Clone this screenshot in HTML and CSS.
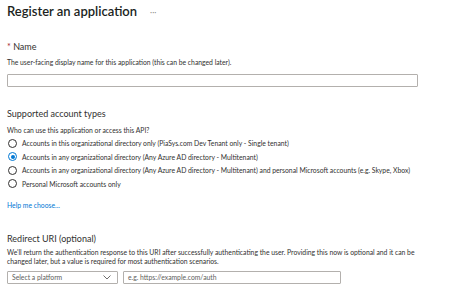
FILE: index.html
```html
<!DOCTYPE html>
<html lang="en">
<head>
  <meta charset="UTF-8">
  <title>Register an application</title>
  <link rel="stylesheet" href="styles.css">
</head>
<body>
  <div class="header">
    <h1>Register an application</h1>
    <span class="more">···</span>
  </div>

  <section class="name-section">
    <div class="field-label"><span class="req">*</span> Name</div>
    <p class="hint">The user-facing display name for this application (this can be changed later).</p>
    <div class="text-input wide"></div>
  </section>

  <section class="accounts">
    <h2>Supported account types</h2>
    <p class="hint">Who can use this application or access this API?</p>
    <div class="radio-list">
      <label class="radio"><span class="circle"></span>Accounts in this organizational directory only (PiaSys.com Dev Tenant only - Single tenant)</label>
      <label class="radio"><span class="circle checked"></span>Accounts in any organizational directory (Any Azure AD directory - Multitenant)</label>
      <label class="radio"><span class="circle"></span>Accounts in any organizational directory (Any Azure AD directory - Multitenant) and personal Microsoft accounts (e.g. Skype, Xbox)</label>
      <label class="radio"><span class="circle"></span>Personal Microsoft accounts only</label>
    </div>
    <a class="help" href="#">Help me choose...</a>
  </section>

  <section class="redirect">
    <h2>Redirect URI (optional)</h2>
    <p class="hint para">We'll return the authentication response to this URI after successfully authenticating the user. Providing this now is optional and it can be changed later, but a value is required for most authentication scenarios.</p>
    <div class="uri-row">
      <div class="select">
        <span>Select a platform</span>
        <svg width="8" height="5" viewBox="0 0 8 5"><path d="M0.5 0.5 L4 4 L7.5 0.5" fill="none" stroke="#605e5c" stroke-width="0.9"/></svg>
      </div>
      <div class="text-input uri"><span class="placeholder">e.g. https://example.com/auth</span></div>
    </div>
  </section>
</body>
</html>
```

FILE: styles.css
```css
body {
  margin: 0;
  padding: 0 7px;
  font-family: Lato, "Noto Sans", sans-serif;
  color: #323130;
  background: #fff;
}

.header {
  display: flex;
  align-items: center;
  gap: 13px;
  height: 22px;
}

h1 {
  margin: 0;
  font-size: 13px;
  font-weight: 600;
  color: #201f1e;
}

.more {
  font-size: 8px;
  color: #8a8886;
  padding-top: 2px;
}

.name-section {
  margin-top: 19px;
}

.field-label {
  font-size: 9px;
  line-height: 11px;
}

.req {
  color: #a4262c;
}

.hint {
  margin: 0;
  font-size: 6.8px;
  line-height: 10px;
  color: #323130;
}

.name-section .hint {
  margin-top: 5px;
}

.text-input {
  box-sizing: border-box;
  height: 13px;
  border: 1px solid #b3b0ad;
  border-radius: 1px;
  background: #fff;
}

.wide {
  width: 411px;
  margin-top: 7px;
}

h2 {
  margin: 0;
  font-size: 9px;
  font-weight: 400;
  line-height: 11px;
}

.accounts {
  margin-top: 21px;
}

.accounts .hint {
  margin-top: 6px;
}

.radio-list {
  display: flex;
  flex-direction: column;
  gap: 3.5px;
  margin-top: 3px;
}

.radio {
  display: flex;
  align-items: center;
  gap: 5px;
  font-size: 6.8px;
  line-height: 10px;
}

.circle {
  box-sizing: border-box;
  width: 9px;
  height: 9px;
  border: 1px solid #323130;
  border-radius: 50%;
  margin-left: 1px;
  display: flex;
  align-items: center;
  justify-content: center;
}

.circle.checked {
  border-color: #0078d4;
}

.circle.checked::after {
  content: "";
  width: 4px;
  height: 4px;
  border-radius: 50%;
  background: #0078d4;
}

.help {
  display: block;
  margin-top: 11px;
  font-size: 6.8px;
  line-height: 10px;
  color: #0078d4;
  text-decoration: none;
}

.redirect {
  margin-top: 23px;
}

.para {
  margin-top: 4px;
  max-width: 412px;
  line-height: 9.5px;
}

.uri-row {
  display: flex;
  gap: 5px;
  margin-top: 4px;
}

.select {
  box-sizing: border-box;
  width: 111px;
  height: 13px;
  border: 1px solid #b3b0ad;
  border-radius: 1px;
  display: flex;
  align-items: center;
  justify-content: space-between;
  padding: 0 6px 0 4px;
  font-size: 6.8px;
  color: #605e5c;
}

.uri {
  width: 218px;
  display: flex;
  align-items: center;
  padding-left: 4px;
}

.placeholder {
  font-size: 6.8px;
  color: #605e5c;
}
```
